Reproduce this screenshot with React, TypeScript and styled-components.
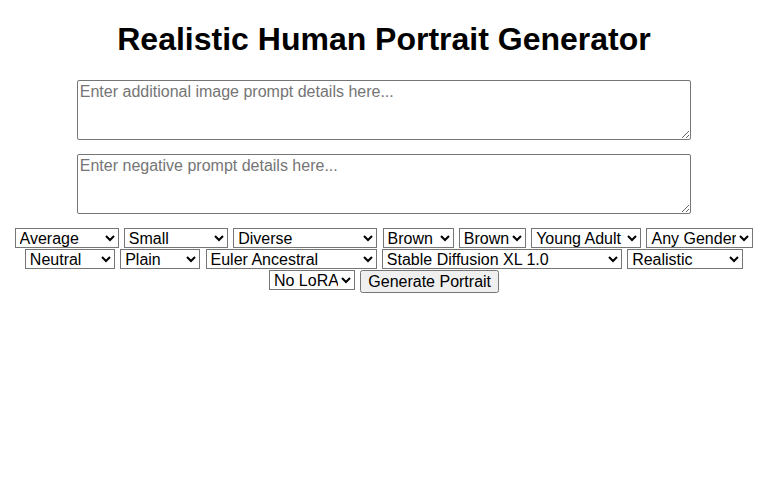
import React from "react";
import styled, { createGlobalStyle } from "styled-components";

const GlobalStyle = createGlobalStyle`
  html, body {
    margin: 0;
    padding: 0;
    background: #ffffff;
  }
  body {
    font-family: "Liberation Sans", Arial, sans-serif;
    color: #000000;
  }
`;

const Page = styled.main`
  display: flex;
  flex-direction: column;
  align-items: center;
`;

const Title = styled.h1`
  margin: 21px 0 22px;
  font-size: 32px;
  font-weight: bold;
  line-height: 37px;
  text-align: center;
`;

const Prompt = styled.textarea`
  box-sizing: border-box;
  width: 80%;
  height: 60px;
  margin: 0 0 14px;
  padding: 2px;
  font-family: "Liberation Sans", Arial, sans-serif;
  font-size: 16px;
  border: 1px solid #767676;
  border-radius: 2px;

  &::placeholder {
    color: #757575;
  }
`;

const Controls = styled.div`
  display: flex;
  flex-wrap: wrap;
  justify-content: center;
  align-items: flex-start;
  column-gap: 5.33px;
  row-gap: 1px;
  width: 100%;
`;

const Picker = styled.select<{ $w: number }>`
  box-sizing: border-box;
  width: ${(p) => p.$w}px;
  height: 20px;
  font-family: "Liberation Sans", Arial, sans-serif;
  font-size: 16px;
  color: #000000;
  background: #ffffff;
`;

const Generate = styled.button`
  box-sizing: border-box;
  height: 23px;
  padding: 1px 6px;
  font-family: "Liberation Sans", Arial, sans-serif;
  font-size: 16px;
`;

const pickers: { w: number; options: string[] }[] = [
  { w: 104, options: ["Average", "Slim", "Athletic", "Heavy"] },
  { w: 104, options: ["Small", "Medium", "Large"] },
  { w: 144, options: ["Diverse", "Caucasian", "Asian", "African"] },
  { w: 71, options: ["Brown", "Blue", "Green"] },
  { w: 67, options: ["Brown", "Black", "Blond"] },
  { w: 110, options: ["Young Adult", "Child", "Adult", "Elderly"] },
  { w: 107, options: ["Any Gender", "Male", "Female"] },
  { w: 90, options: ["Neutral", "Happy", "Sad"] },
  { w: 80, options: ["Plain", "Studio", "Outdoor"] },
  { w: 171, options: ["Euler Ancestral", "Euler", "DPM++ 2M"] },
  { w: 240, options: ["Stable Diffusion XL 1.0", "Stable Diffusion 1.5"] },
  { w: 116, options: ["Realistic", "Cinematic", "Painted"] },
  { w: 86, options: ["No LoRA", "Detail"] },
];

export default function App() {
  return (
    <>
      <GlobalStyle />
      <Page>
        <Title>Realistic Human Portrait Generator</Title>
        <Prompt placeholder="Enter additional image prompt details here..." />
        <Prompt placeholder="Enter negative prompt details here..." />
        <Controls>
          {pickers.map((p, i) => (
            <Picker key={i} $w={p.w} defaultValue={p.options[0]}>
              {p.options.map((o) => (
                <option key={o}>{o}</option>
              ))}
            </Picker>
          ))}
          <Generate>Generate Portrait</Generate>
        </Controls>
      </Page>
    </>
  );
}
